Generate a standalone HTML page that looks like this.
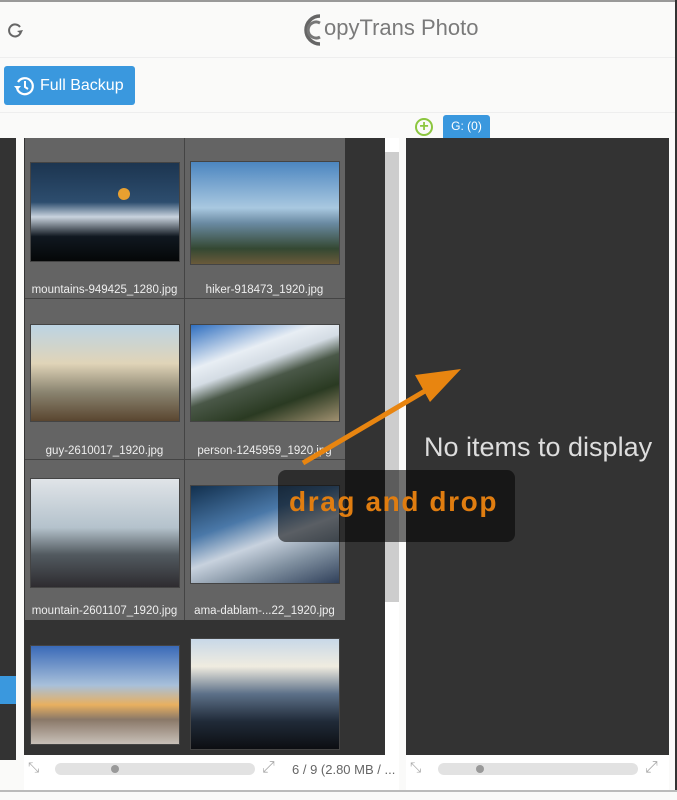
<!DOCTYPE html>
<html><head><style>
*{margin:0;padding:0;box-sizing:border-box}
body{width:677px;height:800px;background:#fafaf9;font-family:"Liberation Sans",sans-serif;position:relative;overflow:hidden}
.a{position:absolute}
.lbl{position:absolute;color:#eee;font-size:11.5px;text-align:center;width:161px;white-space:nowrap}
.img{position:absolute;border:1px solid #444}
</style></head><body>
<div class="a" style="left:0;top:0;width:677px;height:2px;background:#999"></div>
<svg class="a" style="left:6px;top:21px" width="18" height="18" viewBox="0 0 18 18"><path d="M14 6A6 6 0 1 0 14.5 12" fill="none" stroke="#666" stroke-width="2"/><path d="M11 10l4 3 2-4z" fill="#666"/></svg>
<svg class="a" style="left:298px;top:10px" width="30" height="40" viewBox="0 0 30 40"><path d="M22 6A14 14 0 1 0 22 34" fill="none" stroke="#666" stroke-width="3.5"/><path d="M22 13A8 8 0 1 0 22 27" fill="none" stroke="#777" stroke-width="3"/></svg>
<div class="a" style="left:324px;top:15px;font-size:22px;color:#7a7a7a">opyTrans Photo</div>
<div class="a" style="left:0;top:57px;width:677px;height:1px;background:#eee"></div>
<div class="a" style="left:4px;top:66px;width:131px;height:39px;background:#3a98de;border-radius:3px;color:#fff;font-size:16px;line-height:39px;padding-left:36px">Full Backup</div>
<svg class="a" style="left:13px;top:75px" width="22" height="22" viewBox="0 0 22 22"><path d="M5 7A8 8 0 1 1 4 13" fill="none" stroke="#fff" stroke-width="2.2"/><path d="M1 11h7l-3.5 4z" fill="#fff"/><path d="M12 6v6l3 2" fill="none" stroke="#fff" stroke-width="2"/></svg>
<div class="a" style="left:0;top:112px;width:677px;height:1px;background:#eee"></div>
<div class="a" style="left:0;top:138px;width:16px;height:622px;background:#333"></div>
<div class="a" style="left:0;top:676px;width:16px;height:28px;background:#3a98de"></div>
<div class="a" style="left:24px;top:138px;width:361px;height:617px;background:#333"></div>
<div class="a" style="left:25px;top:138px;width:320px;height:482px;background:#646464"></div>
<div class="a" style="left:184px;top:138px;width:1px;height:482px;background:#444"></div>
<div class="a" style="left:25px;top:298px;width:320px;height:1px;background:#444"></div>
<div class="a" style="left:25px;top:459px;width:320px;height:1px;background:#444"></div>
<div class="img" style="left:30px;top:162px;width:150px;height:100px;background:linear-gradient(#1c3550 0%,#2d4d6e 40%,#c9d3de 55%,#101820 75%,#050708)"></div>
<div class="a" style="left:118px;top:188px;width:12px;height:12px;border-radius:50%;background:#e8a030"></div>
<div class="img" style="left:190px;top:161px;width:150px;height:104px;background:linear-gradient(#4c86c0,#a9c8e0 45%,#6a8aa2 60%,#344832 85%,#6a5a3a)"></div>
<div class="lbl" style="left:24px;top:284px">mountains-949425_1280.jpg</div>
<div class="lbl" style="left:184px;top:284px">hiker-918473_1920.jpg</div>
<div class="img" style="left:30px;top:324px;width:150px;height:98px;background:linear-gradient(#bcd4e4,#e0d4b8 40%,#8a8470 70%,#5a4630)"></div>
<div class="img" style="left:190px;top:324px;width:150px;height:98px;background:linear-gradient(160deg,#2f6fc0,#e8eef4 30%,#d4dce4 42%,#4a5848 55%,#2a3a22 75%,#a09070)"></div>
<div class="lbl" style="left:24px;top:445px">guy-2610017_1920.jpg</div>
<div class="lbl" style="left:184px;top:445px">person-1245959_1920.jpg</div>
<div class="img" style="left:30px;top:478px;width:150px;height:110px;background:linear-gradient(#e0e4e8,#b4c2cc 45%,#525a60 70%,#2e2c30)"></div>
<div class="img" style="left:190px;top:485px;width:150px;height:99px;background:linear-gradient(160deg,#12304e,#4a78a8 35%,#c8d2de 55%,#8090a0 75%,#30405a)"></div>
<div class="lbl" style="left:24px;top:605px">mountain-2601107_1920.jpg</div>
<div class="lbl" style="left:184px;top:605px">ama-dablam-...22_1920.jpg</div>
<div class="img" style="left:30px;top:645px;width:150px;height:100px;background:linear-gradient(#3a6ab8,#a8c0da 40%,#e8b060 60%,#8a7868 75%,#c8c0b8)"></div>
<div class="img" style="left:190px;top:638px;width:150px;height:112px;background:linear-gradient(#c8d8e8,#f0ece0 25%,#5c7088 50%,#202a38 75%,#0c0e12)"></div>
<div class="a" style="left:385px;top:138px;width:14px;height:617px;background:#fff"></div>
<div class="a" style="left:385px;top:152px;width:14px;height:450px;background:#cdcdcd"></div>
<div class="a" style="left:406px;top:138px;width:263px;height:617px;background:#333"></div>
<div class="a" style="left:675px;top:0;width:2px;height:790px;background:#333"></div>
<div class="a" style="left:415px;top:118px;width:18px;height:18px;border:2px solid #8cc63f;border-radius:50%;color:#8cc63f;font-size:16px;line-height:13px;text-align:center;font-weight:bold">+</div>
<div class="a" style="left:443px;top:115px;width:47px;height:23px;background:#3a98de;border-radius:3px 3px 0 0;color:#fff;font-size:12px;line-height:23px;text-align:center">G: (0)</div>
<div class="a" style="left:424px;top:432px;color:#ddd;font-size:27px">No items to display</div>
<div class="a" style="left:278px;top:470px;width:237px;height:72px;background:rgba(0,0,0,0.55);border-radius:8px"></div>
<div class="a" style="left:289px;top:486px;color:#e07d10;font-size:28px;font-weight:bold;letter-spacing:1.6px">drag and drop</div>
<svg class="a" style="left:0;top:0" width="677" height="800"><line x1="303" y1="463" x2="430" y2="388" stroke="#e88510" stroke-width="5"/><path d="M461 369L415 375L430 402Z" fill="#e88510"/></svg>
<div class="a" style="left:24px;top:755px;width:375px;height:35px;background:#fff"></div>
<div class="a" style="left:406px;top:755px;width:263px;height:35px;background:#fff"></div>
<div class="a" style="left:55px;top:763px;width:200px;height:12px;background:#e2e2e2;border-radius:6px"></div>
<div class="a" style="left:111px;top:765px;width:8px;height:8px;background:#999;border-radius:50%"></div>
<div class="a" style="left:438px;top:763px;width:200px;height:12px;background:#e2e2e2;border-radius:6px"></div>
<div class="a" style="left:476px;top:765px;width:8px;height:8px;background:#999;border-radius:50%"></div>
<div class="a" style="left:28px;top:759px;color:#aaa;font-size:14px">⤡</div>
<div class="a" style="left:262px;top:759px;color:#aaa;font-size:16px">⤢</div>
<div class="a" style="left:410px;top:759px;color:#aaa;font-size:14px">⤡</div>
<div class="a" style="left:645px;top:759px;color:#aaa;font-size:16px">⤢</div>
<div class="a" style="left:292px;top:762px;color:#666;font-size:13px">6 / 9 (2.80 MB / ...</div>
<div class="a" style="left:0;top:790px;width:677px;height:2px;background:#bbb"></div>
</body></html>
